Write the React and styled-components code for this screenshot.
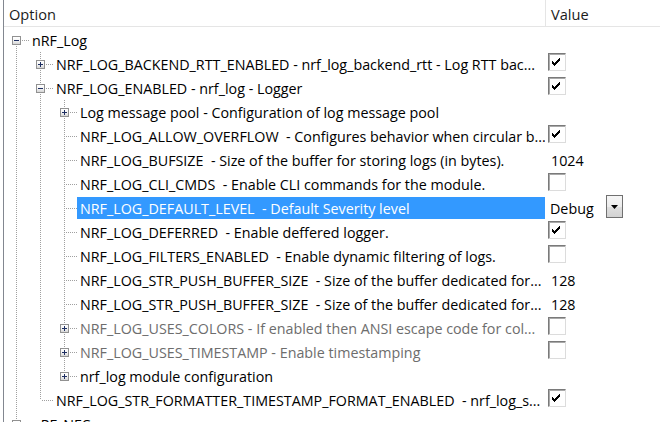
import React from 'react';
import styled, { createGlobalStyle } from 'styled-components';

const GlobalStyle = createGlobalStyle`
  html, body {
    margin: 0;
    padding: 0;
    background: #ffffff;
  }
  body {
    font-family: 'Open Sans', 'Liberation Sans', sans-serif;
    font-size: 14.3px;
    color: #000000;
  }
`;

const dotsV = 'linear-gradient(to bottom, #a0a0a0 50%, transparent 50%)';
const dotsH = 'linear-gradient(to right, #a0a0a0 50%, transparent 50%)';

const Frame = styled.div`
  width: 657px;
  height: 422px;
  margin-left: 3px;
  border-left: 1px solid #828790;
  overflow: hidden;
  background: #ffffff;
`;

const Header = styled.div`
  display: grid;
  grid-template-columns: 541px 1fr;
  height: 26px;
  border-bottom: 1px solid #e5e5e5;
  margin-bottom: 1px;
`;

const HeaderCell = styled.div`
  display: flex;
  align-items: center;
  padding: 2px 0 0 5px;
  border-left: ${p => (p.$divider ? '1px solid #e5e5e5' : 'none')};
  font-size: 14.6px;
  color: #1b1b1b;
`;

const Row = styled.div`
  display: grid;
  grid-template-columns: 541px 1fr;
  height: 24px;
`;

const TreeCell = styled.div`
  display: flex;
  align-items: stretch;
  min-width: 0;
`;

const Guide = styled.span`
  position: relative;
  flex: 0 0 24px;
  &::before {
    content: '';
    display: ${p => (p.$on ? 'block' : 'none')};
    position: absolute;
    left: 12px;
    top: 0;
    bottom: 0;
    width: 1px;
    background: ${dotsV};
    background-size: 1px 2px;
  }
`;

const Connector = styled.span`
  position: relative;
  flex: 0 0 24px;
  &::before {
    content: '';
    position: absolute;
    left: 12px;
    width: 1px;
    top: ${p => (p.$up ? '0' : '12px')};
    bottom: ${p => (p.$down ? '0' : '12px')};
    background: ${dotsV};
    background-size: 1px 2px;
  }
  &::after {
    content: '';
    position: absolute;
    left: 13px;
    right: -1px;
    top: 12px;
    height: 1px;
    background: ${dotsH};
    background-size: 2px 1px;
    background-position: 1px 0;
  }
`;

const Expander = styled.span`
  position: absolute;
  left: 8px;
  top: 8px;
  width: 7px;
  height: 7px;
  border: 1px solid #919191;
  background: linear-gradient(to bottom, #ffffff 0%, #f4f4f4 50%, #d6d6d6 100%);
  z-index: 1;
  display: flex;

  svg {
    display: block;
  }
`;

const Label = styled.span`
  flex: 1;
  min-width: 0;
  margin: 1px 0 1px 1px;
  padding-left: 3px;
  display: flex;
  align-items: center;
  white-space: pre;
  overflow: hidden;
  text-overflow: ellipsis;
  background: ${p => (p.$selected ? '#3399ff' : 'transparent')};
  color: ${p => (p.$selected ? '#ffffff' : p.$muted ? '#6d6d6d' : '#000000')};
  position: relative;
  z-index: 2;
`;

const ValueCell = styled.div`
  display: flex;
  align-items: center;
  min-width: 0;
`;

const ValueText = styled.span`
  padding-left: 6px;
`;

const Checkbox = styled.span`
  position: relative;
  align-self: flex-start;
  margin: 1px 0 0 3px;
  box-sizing: border-box;
  width: 18px;
  height: 18px;
  background: #ffffff;
  border-style: solid;
  border-width: 1px;
  border-color: #7a7a7a #dcdcdc #dcdcdc #7a7a7a;
  box-shadow: inset 1px 1px 0 #a9a9a9;

  svg {
    position: absolute;
    left: 3px;
    top: 4px;
  }
`;

const Combo = styled.span`
  display: flex;
  align-items: center;
  justify-content: space-between;
  width: 78px;
  height: 24px;
  padding-left: 5px;
  box-sizing: border-box;
`;

const DropButton = styled.span`
  align-self: flex-start;
  box-sizing: border-box;
  width: 17px;
  height: 23px;
  margin-top: -1px;
  border: 1px solid #707070;
  background: linear-gradient(to bottom, #f6f6f6 0%, #ececec 50%, #dfdfdf 51%, #d2d2d2 100%);
  display: flex;
  align-items: center;
  justify-content: center;
`;

function Sign({ open }) {
  return (
    <svg width="7" height="7" viewBox="0 0 7 7">
      <path d="M1 3.5h5" stroke="#1e2f62" strokeWidth="1" />
      {!open && <path d="M3.5 1v5" stroke="#1e2f62" strokeWidth="1" />}
    </svg>
  );
}

// classic pixel check mark: each column is a 3px tall run
const checkColumns = [3, 4, 5, 4, 3, 2, 1, 0];

function Check() {
  return (
    <svg width="8" height="8" viewBox="0 0 8 8" shapeRendering="crispEdges">
      {checkColumns.map((top, x) => (
        <rect key={x} x={x} y={top} width="1" height="3" fill="#000" />
      ))}
    </svg>
  );
}

function Value({ value }) {
  if (value === undefined || value === null) return null;
  if (value === true || value === false) {
    return <Checkbox>{value && <Check />}</Checkbox>;
  }
  if (typeof value === 'object' && value.combo) {
    return (
      <Combo>
        <span>{value.combo}</span>
        <DropButton>
          <svg width="7" height="4" viewBox="0 0 7 4">
            <path d="M0 0h7L3.5 4z" fill="#000" />
          </svg>
        </DropButton>
      </Combo>
    );
  }
  return <ValueText>{value}</ValueText>;
}

const rows = [
  { guides: [], up: false, down: true, exp: 'open', label: 'nRF_Log' },
  { guides: [true], up: true, down: true, exp: 'closed', label: 'NRF_LOG_BACKEND_RTT_ENABLED - nrf_log_backend_rtt - Log RTT bac...', value: true },
  { guides: [true], up: true, down: true, exp: 'open', label: 'NRF_LOG_ENABLED - nrf_log - Logger', value: true },
  { guides: [true, true], up: true, down: true, exp: 'closed', label: 'Log message pool - Configuration of log message pool' },
  { guides: [true, true], up: true, down: true, label: 'NRF_LOG_ALLOW_OVERFLOW  - Configures behavior when circular b...', value: true },
  { guides: [true, true], up: true, down: true, label: 'NRF_LOG_BUFSIZE  - Size of the buffer for storing logs (in bytes).', value: '1024' },
  { guides: [true, true], up: true, down: true, label: 'NRF_LOG_CLI_CMDS  - Enable CLI commands for the module.', value: false },
  { guides: [true, true], up: true, down: true, label: 'NRF_LOG_DEFAULT_LEVEL  - Default Severity level', value: { combo: 'Debug' }, selected: true },
  { guides: [true, true], up: true, down: true, label: 'NRF_LOG_DEFERRED  - Enable deffered logger.', value: true },
  { guides: [true, true], up: true, down: true, label: 'NRF_LOG_FILTERS_ENABLED  - Enable dynamic filtering of logs.', value: false },
  { guides: [true, true], up: true, down: true, label: 'NRF_LOG_STR_PUSH_BUFFER_SIZE  - Size of the buffer dedicated for...', value: '128' },
  { guides: [true, true], up: true, down: true, label: 'NRF_LOG_STR_PUSH_BUFFER_SIZE  - Size of the buffer dedicated for...', value: '128' },
  { guides: [true, true], up: true, down: true, exp: 'closed', muted: true, label: 'NRF_LOG_USES_COLORS - If enabled then ANSI escape code for col...', value: false },
  { guides: [true, true], up: true, down: true, exp: 'closed', muted: true, label: 'NRF_LOG_USES_TIMESTAMP - Enable timestamping', value: false },
  { guides: [true, true], up: true, down: false, exp: 'closed', label: 'nrf_log module configuration' },
  { guides: [true], up: true, down: false, label: 'NRF_LOG_STR_FORMATTER_TIMESTAMP_FORMAT_ENABLED  - nrf_log_s...', value: true },
  { guides: [], up: true, down: true, exp: 'closed', label: 'nRF_NFC' },
];

export default function App() {
  return (
    <>
      <GlobalStyle />
      <Frame>
        <Header>
          <HeaderCell>Option</HeaderCell>
          <HeaderCell $divider>Value</HeaderCell>
        </Header>
        {rows.map((r, i) => (
          <Row key={i}>
            <TreeCell>
              {r.guides.map((on, j) => (
                <Guide key={j} $on={on} />
              ))}
              <Connector $up={r.up} $down={r.down}>
                {r.exp && (
                  <Expander>
                    <Sign open={r.exp === 'open'} />
                  </Expander>
                )}
              </Connector>
              <Label $selected={r.selected} $muted={r.muted}>{r.label}</Label>
            </TreeCell>
            <ValueCell>
              <Value value={r.value} />
            </ValueCell>
          </Row>
        ))}
      </Frame>
    </>
  );
}
